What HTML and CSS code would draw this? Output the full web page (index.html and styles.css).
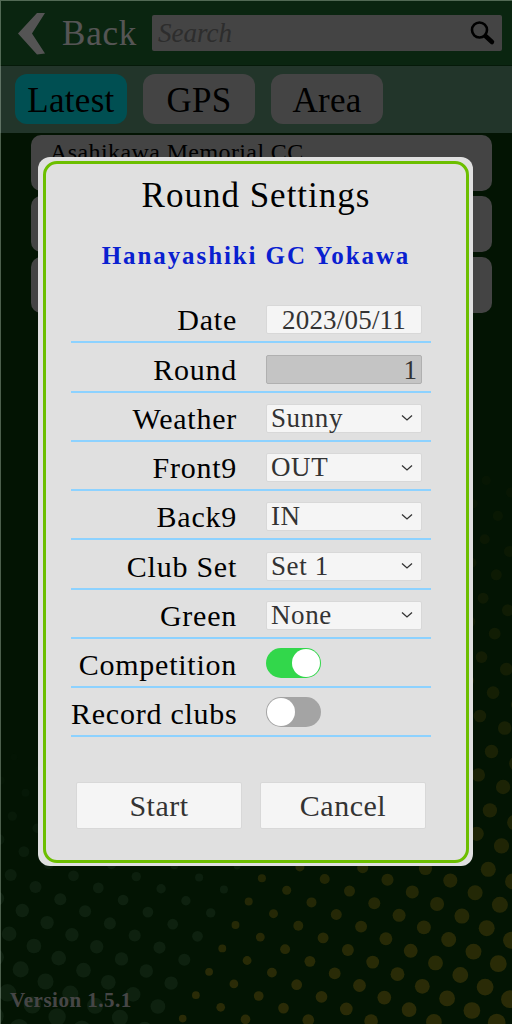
FILE: index.html
```html
<!DOCTYPE html>
<html lang="en">
<head>
  <meta charset="UTF-8">
  <title>Round Settings</title>
  <link rel="stylesheet" href="styles.css">
</head>
<body>
<div class="screen">
  <!-- Dotted background, filled in by dots.js -->
  <svg id="dots" class="dots" width="512" height="1024" viewBox="0 0 512 1024"></svg>

  <header class="top-bar">
    <div class="back">
      <svg class="back-arrow" width="28" height="42" viewBox="0 0 28 42">
        <path d="M19 0 L27 0 L14 20.500 L27 40.500 L19 41.500 L0 20.500 Z" fill="#f0f0f0"/>
      </svg>
      <span>Back</span>
    </div>
    <div class="search">
      <span class="search-text">Search</span>
      <svg width="26" height="26" viewBox="0 0 26 26">
        <circle cx="9.500" cy="10" r="7.500" fill="none" stroke="#000" stroke-width="2.600"/>
        <path d="M15.500 16 L22 22" stroke="#000" stroke-width="4.500" stroke-linecap="round"/>
      </svg>
    </div>
  </header>

  <nav class="tab-bar">
    <div class="tab tab-active">Latest</div>
    <div class="tab">GPS</div>
    <div class="tab">Area</div>
  </nav>

  <div class="course-list">
    <div class="course-card">Asahikawa Memorial CC</div>
    <div class="course-card">Tsubetsu GC</div>
    <div class="course-card">Rumoi GC</div>
  </div>

  <div class="version">Version 1.5.1</div>

  <!-- Modal -->
  <div class="overlay">
    <div class="dialog">
      <div class="dialog-inner">
        <h1 class="dialog-title">Round Settings</h1>
        <div class="course-name">Hanayashiki GC Yokawa</div>

        <div class="form">
          <div class="row">
            <label class="row-label">Date</label>
            <div class="field field-date">2023/05/11</div>
          </div>
          <div class="row">
            <label class="row-label">Round</label>
            <div class="field field-number">1</div>
          </div>
          <div class="row">
            <label class="row-label">Weather</label>
            <div class="field field-select"><span>Sunny</span>
              <svg width="12" height="8" viewBox="0 0 12 8"><path d="M1 1.500 L6 6 L11 1.500" fill="none" stroke="#333" stroke-width="1.300"/></svg>
            </div>
          </div>
          <div class="row">
            <label class="row-label">Front9</label>
            <div class="field field-select"><span>OUT</span>
              <svg width="12" height="8" viewBox="0 0 12 8"><path d="M1 1.500 L6 6 L11 1.500" fill="none" stroke="#333" stroke-width="1.300"/></svg>
            </div>
          </div>
          <div class="row">
            <label class="row-label">Back9</label>
            <div class="field field-select"><span>IN</span>
              <svg width="12" height="8" viewBox="0 0 12 8"><path d="M1 1.500 L6 6 L11 1.500" fill="none" stroke="#333" stroke-width="1.300"/></svg>
            </div>
          </div>
          <div class="row">
            <label class="row-label">Club Set</label>
            <div class="field field-select"><span>Set 1</span>
              <svg width="12" height="8" viewBox="0 0 12 8"><path d="M1 1.500 L6 6 L11 1.500" fill="none" stroke="#333" stroke-width="1.300"/></svg>
            </div>
          </div>
          <div class="row">
            <label class="row-label">Green</label>
            <div class="field field-select"><span>None</span>
              <svg width="12" height="8" viewBox="0 0 12 8"><path d="M1 1.500 L6 6 L11 1.500" fill="none" stroke="#333" stroke-width="1.300"/></svg>
            </div>
          </div>
          <div class="row">
            <label class="row-label">Competition</label>
            <div class="toggle toggle-on"><div class="knob"></div></div>
          </div>
          <div class="row">
            <label class="row-label">Record clubs</label>
            <div class="toggle"><div class="knob"></div></div>
          </div>
        </div>

        <div class="buttons">
          <button class="btn">Start</button>
          <button class="btn">Cancel</button>
        </div>
      </div>
    </div>
  </div>
</div>
<script src="dots.js"></script>
</body>
</html>
```
FILE: styles.css
```css
/* Page */
html, body {
  margin: 0;
  padding: 0;
  background: #093909;
}
.screen {
  position: relative;
  width: 512px;
  height: 1024px;
  overflow: hidden;
  display: flex;
  flex-direction: column;
  font-family: "Liberation Serif", serif;
  color: #000;
  background: #093909;
}
.dots {
  position: absolute;
  left: 0;
  top: 0;
}

/* Top bar */
.top-bar {
  position: relative;
  height: 66px;
  box-sizing: border-box;
  padding: 15px 10px 0 18px;
  display: flex;
  gap: 18px;
  background: #1d6a2e;
  border-bottom: 1px solid #0f4a1c;
}
.back {
  display: flex;
  align-items: center;
  height: 38px;
  gap: 16px;
  font-size: 35px;
  letter-spacing: 0.8px;
  color: #f3f3f3;
  width: 116px;
  flex: none;
}
.back-arrow {
  flex: none;
}
.search {
  flex: 1;
  height: 36px;
  background: #c2c2c2;
  border-radius: 2px;
  display: flex;
  align-items: center;
  justify-content: space-between;
  padding: 0 6px 0 6px;
  box-sizing: border-box;
}
.search-text {
  font-style: italic;
  font-size: 27px;
  color: #808080;
}

/* Tabs */
.tab-bar {
  position: relative;
  height: 67px;
  box-sizing: border-box;
  padding: 8px 15px 0;
  display: flex;
  gap: 16px;
  background: #619778;
}
.tab {
  width: 112px;
  height: 50px;
  border-radius: 12px;
  background: #c2c2c2;
  font-size: 35px;
  letter-spacing: 0.3px;
  line-height: 54px;
  text-align: center;
}
.tab-active {
  background: #00e2ea;
}

/* Course list behind the dialog */
.course-list {
  position: relative;
  padding: 2px 20px 0 31px;
  display: flex;
  flex-direction: column;
  gap: 5px;
}
.course-card {
  height: 56px;
  box-sizing: border-box;
  padding: 4px 19px;
  background: #c2c2c2;
  border-radius: 10px;
  font-size: 24px;
  letter-spacing: 0.4px;
}

.version {
  position: relative;
  margin-top: auto;
  padding: 0 0 11px 10px;
  font-size: 21px;
  font-weight: bold;
  letter-spacing: 0.5px;
  color: #c8c8c8;
}

/* Modal */
.overlay {
  position: absolute;
  left: 0;
  top: 0;
  right: 0;
  bottom: 0;
  padding: 157px 39px 0 38px;
  background: rgba(0, 0, 0, 0.65);
  box-shadow: inset 1px 1px 0 rgba(190, 210, 190, 0.4);
}
.dialog {
  height: 709px;
  box-sizing: border-box;
  padding: 4px 4px 3px 5px;
  background: #e0e0e0;
  border-radius: 12px;
}
.dialog-inner {
  height: 100%;
  box-sizing: border-box;
  border: 3px solid #6cbf00;
  border-radius: 14px;
  padding: 0 35px 0 25px;
  background: #e0e0e0;
  display: flex;
  flex-direction: column;
}
.dialog-title {
  margin: 13px 0 0;
  padding-left: 10px;
  font-size: 35px;
  font-weight: normal;
  text-align: center;
  letter-spacing: 1px;
  line-height: 38px;
}
.course-name {
  margin-top: 26px;
  padding-left: 10px;
  font-size: 25px;
  font-weight: bold;
  text-align: center;
  letter-spacing: 1.9px;
  line-height: 30px;
  color: #0a20d0;
}

/* Form rows */
.form {
  margin-top: 23px;
}
.row {
  height: 49.25px;
  box-sizing: border-box;
  padding-bottom: 7px;
  display: flex;
  align-items: flex-end;
  gap: 29px;
  border-bottom: 2.500px solid #8dd2ff;
}
.row-label {
  width: 166px;
  flex: none;
  text-align: right;
  font-size: 30px;
  line-height: 29px;
  letter-spacing: 0.75px;
  white-space: nowrap;
}
.field {
  width: 156px;
  height: 29px;
  box-sizing: border-box;
  font-size: 27px;
  line-height: 29px;
  color: #333;
  background: #f5f5f5;
  border: 1px solid #d8d8d8;
  border-radius: 2px;
}
.field-date {
  text-align: center;
  letter-spacing: 0.2px;
}
.field-number {
  background: #c4c4c4;
  border-color: #b0b0b0;
  text-align: right;
  padding-right: 4px;
}
.field-select {
  display: flex;
  align-items: center;
  justify-content: space-between;
  padding: 0 8px 0 4px;
  letter-spacing: 0.6px;
}
.toggle {
  width: 55px;
  height: 30px;
  margin-bottom: 1px;
  box-sizing: border-box;
  padding: 1px;
  border-radius: 15px;
  background: #a4a4a4;
  display: flex;
  justify-content: flex-start;
}
.toggle-on {
  background: #32d74b;
  justify-content: flex-end;
}
.knob {
  width: 28px;
  height: 28px;
  border-radius: 50%;
  background: #fff;
}

/* Start / Cancel */
.buttons {
  margin-top: 45px;
  padding: 0 5px;
  display: flex;
  justify-content: space-between;
}
.btn {
  width: 166px;
  height: 47px;
  background: #f5f5f5;
  border: 1px solid #d8d8d8;
  border-radius: 2px;
  font-family: inherit;
  font-size: 30px;
  letter-spacing: 0.5px;
  color: #333;
}
```
FILE: dots.js
```js
// Halftone dots on a slanted grid, growing toward the bottom of the screen
const svg = document.getElementById("dots");
const NS = "http://www.w3.org/2000/svg";

function clamp(v, lo, hi) {
  return Math.min(hi, Math.max(lo, v));
}

for (let i = -30; i <= 30; i++) {
  for (let j = -60; j <= 30; j++) {
    const x = 488.3 - 38 * i - 13.2 * j;
    const y = 869.3 + 11.3 * i + 23.4 * j;
    if (x < -10 || x > 522 || y < 480 || y > 1034) continue;

    // which side of the slanted boundary the dot is on
    const side = (x - 261) * 23.4 + (y - 877) * 13.2;
    const c = document.createElementNS(NS, "circle");
    c.setAttribute("cx", x);
    c.setAttribute("cy", y);

    if (side > -400) {
      c.setAttribute("r", 4 + 0.0159 * (x - 261) + 0.0075 * (y - 877));
      c.setAttribute("fill", "rgb(120,125,20)");
      c.setAttribute("opacity", clamp((y - 420) / 560, 0.08, 1));
    } else {
      c.setAttribute("r", clamp(4 - 0.0109 * (x - 223) + 0.0224 * (y - 888), 1, 10));
      c.setAttribute("fill", "rgb(40,95,45)");
      c.setAttribute("opacity", clamp((y - 740) / 160, 0, 1));
    }
    svg.appendChild(c);
  }
}
```
